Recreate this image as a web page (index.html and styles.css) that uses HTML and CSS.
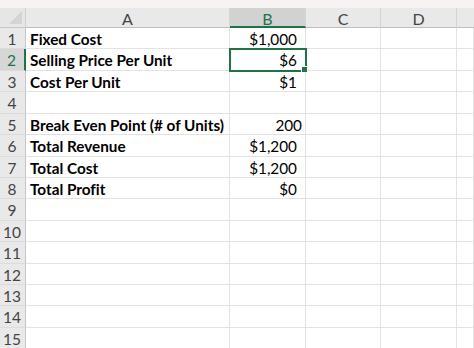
FILE: index.html
```html
<!DOCTYPE html>
<html lang="en">
<head>
    <meta charset="UTF-8">
    <title>Break Even</title>
    <link rel="stylesheet" href="styles.css">
</head>
<body>
    <div class="strip"></div>
    <div class="sheet">
        <div class="corner"></div>
        <div class="col-head">A</div>
        <div class="col-head active">B</div>
        <div class="col-head">C</div>
        <div class="col-head">D</div>
        <div class="col-head last"></div>

        <div class="row-head">1</div>
        <div class="cell label">Fixed Cost</div>
        <div class="cell num money">$1,000</div>
        <div class="cell"></div><div class="cell"></div><div class="cell"></div>

        <div class="row-head active">2</div>
        <div class="cell label">Selling Price Per Unit</div>
        <div class="cell num money selected">$6</div>
        <div class="cell"></div><div class="cell"></div><div class="cell"></div>

        <div class="row-head">3</div>
        <div class="cell label">Cost Per Unit</div>
        <div class="cell num money">$1</div>
        <div class="cell"></div><div class="cell"></div><div class="cell"></div>

        <div class="row-head">4</div>
        <div class="cell"></div><div class="cell"></div>
        <div class="cell"></div><div class="cell"></div><div class="cell"></div>

        <div class="row-head">5</div>
        <div class="cell label">Break Even Point (# of Units)</div>
        <div class="cell num">200</div>
        <div class="cell"></div><div class="cell"></div><div class="cell"></div>

        <div class="row-head">6</div>
        <div class="cell label">Total Revenue</div>
        <div class="cell num money">$1,200</div>
        <div class="cell"></div><div class="cell"></div><div class="cell"></div>

        <div class="row-head">7</div>
        <div class="cell label">Total Cost</div>
        <div class="cell num money">$1,200</div>
        <div class="cell"></div><div class="cell"></div><div class="cell"></div>

        <div class="row-head">8</div>
        <div class="cell label">Total Profit</div>
        <div class="cell num money">$0</div>
        <div class="cell"></div><div class="cell"></div><div class="cell"></div>

        <div class="row-head">9</div>
        <div class="cell"></div><div class="cell"></div>
        <div class="cell"></div><div class="cell"></div><div class="cell"></div>

        <div class="row-head">10</div>
        <div class="cell"></div><div class="cell"></div>
        <div class="cell"></div><div class="cell"></div><div class="cell"></div>

        <div class="row-head">11</div>
        <div class="cell"></div><div class="cell"></div>
        <div class="cell"></div><div class="cell"></div><div class="cell"></div>

        <div class="row-head">12</div>
        <div class="cell"></div><div class="cell"></div>
        <div class="cell"></div><div class="cell"></div><div class="cell"></div>

        <div class="row-head">13</div>
        <div class="cell"></div><div class="cell"></div>
        <div class="cell"></div><div class="cell"></div><div class="cell"></div>

        <div class="row-head">14</div>
        <div class="cell"></div><div class="cell"></div>
        <div class="cell"></div><div class="cell"></div><div class="cell"></div>

        <div class="row-head">15</div>
        <div class="cell"></div><div class="cell"></div>
        <div class="cell"></div><div class="cell"></div><div class="cell"></div>
    </div>
</body>
</html>
```
FILE: styles.css
```css
body {
    margin: 0;
    background-color: #fff;
    font-family: Lato, "Liberation Sans", sans-serif;
    font-variant-ligatures: none;
    color: #000;
    overflow: hidden;
}

.strip {
    height: 8px;
    background-color: #f7f3f3;
}

.sheet {
    display: grid;
    grid-template-columns: 26px 204px 76px 75px 76px 1fr;
    grid-template-rows: 20px;
    grid-auto-rows: 21.43px;
}

.corner {
    position: relative;
    background-color: #e6e6e6;
    border-right: 1px solid #d0d0d0;
    border-bottom: 1px solid #c6c6c6;
}

.corner::after {
    content: "";
    position: absolute;
    right: 3px;
    bottom: 3px;
    border-left: 13px solid transparent;
    border-bottom: 13px solid #d4d4d4;
}

.col-head {
    background-color: #e9e9e9;
    border-right: 1px solid #d4d4d4;
    border-bottom: 1px solid #bdbdbd;
    color: #444;
    font-size: 16px;
    text-align: center;
    line-height: 21px;
}

.col-head.active {
    background-color: #d2d2d2;
    color: #217346;
    border-bottom: 2px solid #217346;
}

.col-head.last {
    border-right: none;
}

.row-head {
    background-color: #e9e9e9;
    border-right: 1px solid #c6c6c6;
    border-bottom: 1px solid #dcdcdc;
    color: #444;
    font-size: 15.5px;
    text-align: center;
    padding-right: 1px;
    line-height: 23px;
}

.row-head.active {
    background-color: #d6d6d6;
    color: #217346;
    border-right: 2px solid #217346;
}

.cell {
    border-right: 1px solid #e3e3e3;
    border-bottom: 1px solid #e3e3e3;
    font-size: 15.3px;
    line-height: 22px;
    white-space: nowrap;
    padding: 0 3px;
}

.label {
    font-weight: bold;
    padding-left: 4px;
}

.num {
    text-align: right;
    padding-right: 3px;
}

.num.money {
    padding-right: 8px;
}

.selected {
    position: relative;
    outline: 2px solid #217346;
    outline-offset: -1px;
    z-index: 1;
}

.selected::after {
    content: "";
    position: absolute;
    right: -3px;
    bottom: -3px;
    width: 5px;
    height: 5px;
    background-color: #217346;
    border: 1px solid #fff;
}
```
